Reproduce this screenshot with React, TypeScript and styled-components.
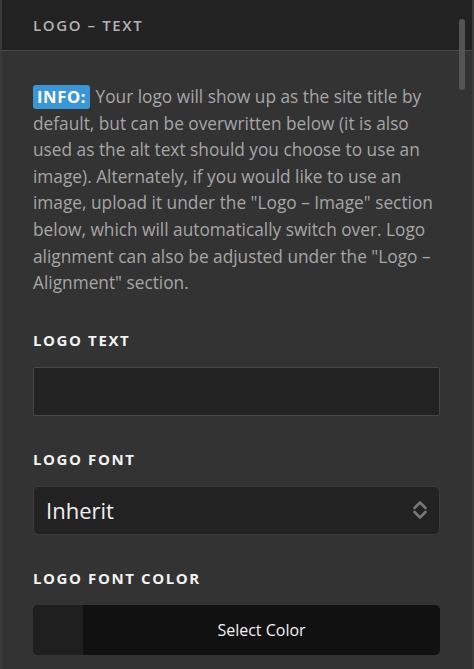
import styled, { createGlobalStyle } from "styled-components";

const Global = createGlobalStyle`
	html, body {
		margin: 0;
		padding: 0;
		background: #333333;
	}
	* { box-sizing: border-box; }
`;

const Panel = styled.div`
	position: relative;
	width: 474px;
	height: 669px;
	overflow: hidden;
	background: #333333;
	border-left: 2px solid #3a3a3a;
	border-right: 2px solid #3d3d3d;
	font-family: "Open Sans", "Liberation Sans", sans-serif;
`;

const Header = styled.header`
	height: 51px;
	display: flex;
	align-items: center;
	padding-left: 31px;
	background: #222222;
	border-bottom: 1px solid #474747;
`;

const HeaderTitle = styled.h2`
	margin: 0;
	font-size: 15px;
	font-weight: 600;
	letter-spacing: 1.6px;
	color: #b3b3b3;
	text-transform: uppercase;
`;

const ScrollThumb = styled.div`
	position: absolute;
	top: 19px;
	right: 7px;
	width: 6px;
	height: 71px;
	border-radius: 3px;
	background: #545454;
`;

const Body = styled.div`
	padding: 33px 32px 0 31px;
	display: flex;
	flex-direction: column;
`;

const Description = styled.p`
	margin: 0 0 33px;
	font-size: 17.3px;
	line-height: 26.6px;
	color: #a6a6a6;
`;

const Badge = styled.span`
	display: inline-block;
	padding: 0 4px;
	margin-right: 1px;
	font-size: 16.6px;
	line-height: 24px;
	border-radius: 3px;
	background: #3a97d4;
	color: #ffffff;
	font-weight: 700;
	letter-spacing: 0.6px;
`;

const Field = styled.div`
	display: flex;
	flex-direction: column;
	gap: 17px;
	margin-bottom: 33px;
`;

const Label = styled.label`
	font-size: 15px;
	line-height: 20px;
	font-weight: 700;
	letter-spacing: 1.6px;
	color: #f2f2f2;
	text-transform: uppercase;
`;

const TextInput = styled.input`
	height: 49px;
	width: 100%;
	background: #222222;
	border: 1px solid #474747;
	border-radius: 2px;
	outline: none;
	color: #eee;
	font-family: inherit;
	font-size: 18px;
	padding: 0 12px;
`;

const Select = styled.div`
	height: 49px;
	display: flex;
	align-items: center;
	justify-content: space-between;
	padding: 0 11px 0 12px;
	background: #222222;
	border: 1px solid #3b3b3b;
	border-radius: 6px;
	color: #f0f0f0;
	font-size: 22px;
`;

const ColorButton = styled.div`
	height: 50px;
	display: flex;
	border-radius: 5px;
	overflow: hidden;
	background: #111111;
`;

const Swatch = styled.div`
	width: 50px;
	background: #1f1f1f;
`;

const ColorLabel = styled.span`
	flex: 1;
	display: flex;
	align-items: center;
	justify-content: center;
	font-size: 16px;
	color: #f2f2f2;
`;

function UpDown() {
	return (
		<svg width="16" height="22" viewBox="0 0 16 22" fill="none">
			<path d="M2.5 9 L8 3.5 L13.5 9" stroke="#777" strokeWidth="2.6" strokeLinecap="round" strokeLinejoin="round" />
			<path d="M2.5 13 L8 18.5 L13.5 13" stroke="#777" strokeWidth="2.6" strokeLinecap="round" strokeLinejoin="round" />
		</svg>
	);
}

export default function App() {
	return (
		<Panel>
			<Global />
			<Header>
				<HeaderTitle>Logo – Text</HeaderTitle>
			</Header>
			<ScrollThumb />
			<Body>
				<Description>
					<Badge>INFO:</Badge> Your logo will show up as the site title by default, but can be overwritten below (it is also used as the alt text should you choose to use an image). Alternately, if you would like to use an image, upload it under the "Logo – Image" section below, which will automatically switch over. Logo alignment can also be adjusted under the "Logo – Alignment" section.
				</Description>
				<Field>
					<Label>Logo Text</Label>
					<TextInput type="text" />
				</Field>
				<Field>
					<Label>Logo Font</Label>
					<Select>
						<span>Inherit</span>
						<UpDown />
					</Select>
				</Field>
				<Field>
					<Label>Logo Font Color</Label>
					<ColorButton>
						<Swatch />
						<ColorLabel>Select Color</ColorLabel>
					</ColorButton>
				</Field>
			</Body>
		</Panel>
	);
}
